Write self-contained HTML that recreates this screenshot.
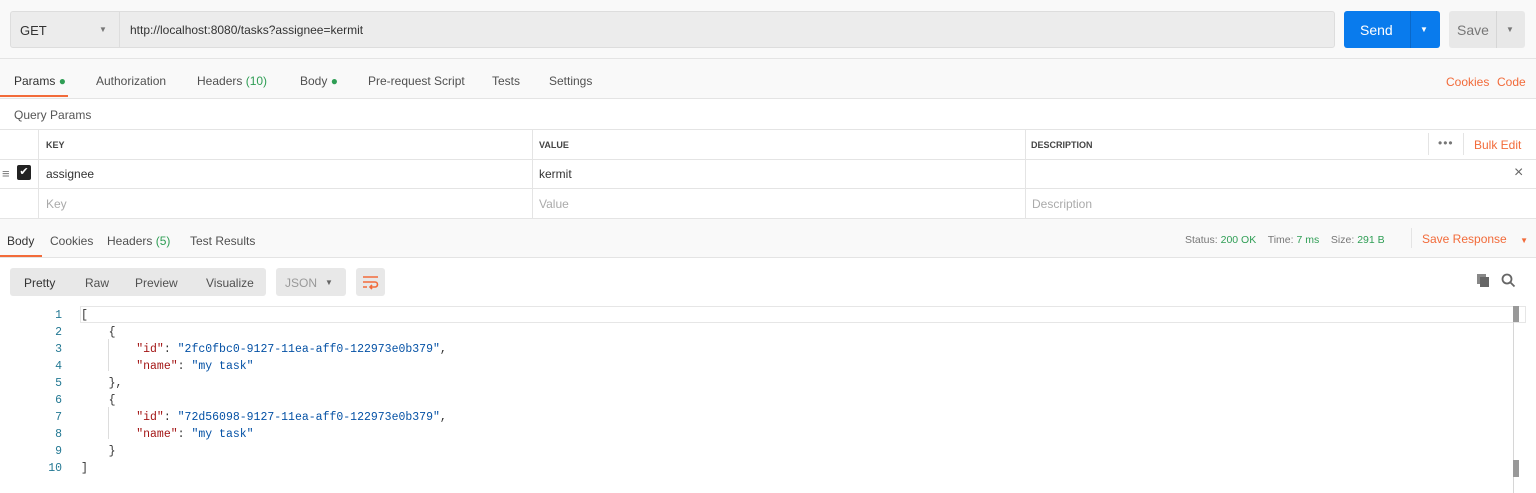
<!DOCTYPE html>
<html><head><meta charset="utf-8"><style>
*{box-sizing:border-box;margin:0;padding:0}
body{width:1536px;height:493px;overflow:hidden;background:#fff;font-family:"Liberation Sans",sans-serif;font-size:12px;color:#505050;position:relative}
.a{position:absolute;white-space:nowrap}
.hl{position:absolute;left:0;width:1536px;height:1px;background:#e4e4e4}
.vl{position:absolute;width:1px;background:#e4e4e4}
.or{color:#f26b3a}
.gr{color:#2f9e55}
.mono{font-family:"Liberation Mono",monospace;font-size:11.5px}
.k{color:#a31515}.s{color:#0451a5}.n{color:#237893}
</style></head><body>
<div class="a" style="left:0;top:0;width:1536px;height:98px;background:#f9f9f9"></div>
<div class="a" style="left:10px;top:11px;width:1325px;height:37px;background:#ececec;border:1px solid #ddd;border-radius:3px"></div>
<div class="vl" style="left:119px;top:12px;height:35px;background:#ddd"></div>
<div class="a" style="left:20px;top:23px;font-size:13px;color:#333">GET</div>
<div class="a" style="left:99px;top:25px;font-size:8px;color:#777">▼</div>
<div class="a" style="left:130px;top:23px;font-size:12px;color:#333">http://localhost:8080/tasks?assignee=kermit</div>
<div class="a" style="left:1344px;top:11px;width:96px;height:37px;background:#097bed;border-radius:3px"></div>
<div class="vl" style="left:1410px;top:11px;height:37px;background:#0a68c8"></div>
<div class="a" style="left:1360px;top:22px;font-size:14px;color:#fff">Send</div>
<div class="a" style="left:1420px;top:25px;font-size:8px;color:#fff">▼</div>
<div class="a" style="left:1449px;top:11px;width:76px;height:37px;background:#e8e8e8;border-radius:3px"></div>
<div class="vl" style="left:1496px;top:11px;height:37px;background:#d6d6d6"></div>
<div class="a" style="left:1457px;top:22px;font-size:14px;color:#777">Save</div>
<div class="a" style="left:1506px;top:25px;font-size:8px;color:#777">▼</div>
<div class="hl" style="top:58px"></div>
<div class="a" style="left:14px;top:74px;color:#333">Params <span class="gr">●</span></div>
<div class="a" style="left:96px;top:74px">Authorization</div>
<div class="a" style="left:197px;top:74px">Headers <span class="gr">(10)</span></div>
<div class="a" style="left:300px;top:74px">Body <span class="gr">●</span></div>
<div class="a" style="left:368px;top:74px">Pre-request Script</div>
<div class="a" style="left:492px;top:74px">Tests</div>
<div class="a" style="left:549px;top:74px">Settings</div>
<div class="a or" style="left:1446px;top:75px">Cookies</div>
<div class="a or" style="left:1497px;top:75px">Code</div>
<div class="a" style="left:0;top:95px;width:68px;height:2px;background:#f26b3a"></div>
<div class="hl" style="top:98px"></div>
<div class="a" style="left:14px;top:108px;color:#555">Query Params</div>
<div class="hl" style="top:129px"></div>
<div class="hl" style="top:159px"></div>
<div class="hl" style="top:188px"></div>
<div class="hl" style="top:218px"></div>
<div class="vl" style="left:38px;top:129px;height:89px"></div>
<div class="vl" style="left:532px;top:129px;height:89px"></div>
<div class="vl" style="left:1025px;top:129px;height:89px"></div>
<div class="vl" style="left:1428px;top:133px;height:22px"></div>
<div class="vl" style="left:1463px;top:133px;height:22px"></div>
<div class="a" style="left:46px;top:140px;font-size:9px;font-weight:bold;color:#444">KEY</div>
<div class="a" style="left:539px;top:140px;font-size:9px;font-weight:bold;color:#444">VALUE</div>
<div class="a" style="left:1031px;top:140px;font-size:9px;font-weight:bold;color:#444">DESCRIPTION</div>
<div class="a" style="left:1438px;top:136px;font-size:12px;color:#777;letter-spacing:1px">•••</div>
<div class="a or" style="left:1474px;top:138px">Bulk Edit</div>
<div class="a" style="left:2px;top:166px;font-size:13px;color:#777">≡</div>
<div class="a" style="left:17px;top:165px;width:14px;height:15px;background:#222;border-radius:2px;color:#fff;font-size:11px;text-align:center;line-height:15px">✔</div>
<div class="a" style="left:46px;top:167px;color:#333">assignee</div>
<div class="a" style="left:539px;top:167px;color:#333">kermit</div>
<div class="a" style="left:1514px;top:164px;font-size:16px;color:#666">×</div>
<div class="a" style="left:46px;top:197px;color:#aaa">Key</div>
<div class="a" style="left:539px;top:197px;color:#aaa">Value</div>
<div class="a" style="left:1032px;top:197px;color:#aaa">Description</div>
<div class="a" style="left:0;top:219px;width:1536px;height:38px;background:#f9f9f9"></div>
<div class="a" style="left:7px;top:234px;color:#333">Body</div>
<div class="a" style="left:50px;top:234px">Cookies</div>
<div class="a" style="left:107px;top:234px">Headers <span class="gr">(5)</span></div>
<div class="a" style="left:190px;top:234px">Test Results</div>
<div class="a" style="left:0;top:255px;width:42px;height:2px;background:#f26b3a"></div>
<div class="a" style="left:1185px;top:234px;font-size:10.5px;color:#777">Status: <span class="gr">200 OK</span>&nbsp;&nbsp;&nbsp; Time: <span class="gr">7 ms</span>&nbsp;&nbsp;&nbsp; Size: <span class="gr">291 B</span></div>
<div class="vl" style="left:1411px;top:228px;height:20px"></div>
<div class="a or" style="left:1422px;top:232px">Save Response&nbsp;&nbsp;&nbsp; <span style="font-size:8px">▼</span></div>
<div class="hl" style="top:257px"></div>
<div class="a" style="left:10px;top:268px;width:256px;height:28px;background:#e8e8e8;border-radius:3px"></div>
<div class="a" style="left:24px;top:276px;color:#333">Pretty</div>
<div class="a" style="left:85px;top:276px">Raw</div>
<div class="a" style="left:135px;top:276px">Preview</div>
<div class="a" style="left:206px;top:276px">Visualize</div>
<div class="a" style="left:276px;top:268px;width:70px;height:28px;background:#e8e8e8;border-radius:3px"></div>
<div class="a" style="left:285px;top:276px;color:#999">JSON</div>
<div class="a" style="left:325px;top:278px;font-size:8px;color:#666">▼</div>
<div class="a" style="left:356px;top:268px;width:29px;height:28px;background:#e8e8e8;border-radius:3px"></div>
<svg class="a" style="left:362px;top:274px" width="17" height="16" viewBox="0 0 17 16" fill="none" stroke="#f26b3a" stroke-width="1.6"><path d="M1 3h15M1 8h12a2.5 2.5 0 0 1 0 5H8M10 11l-2 2 2 2M1 13h4"/></svg>
<svg class="a" style="left:1476px;top:273px" width="14" height="15"><rect x="1" y="1" width="9" height="10" fill="#888"/><rect x="4" y="4" width="9" height="10" fill="#666"/></svg>
<svg class="a" style="left:1501px;top:273px" width="15" height="15" fill="none" stroke="#666" stroke-width="1.8"><circle cx="6" cy="6" r="4.5"/><path d="M9.5 9.5l4 4"/></svg>
<div class="a" style="left:80px;top:306px;width:1446px;height:17px;border:1px solid #e6e6e6"></div>
<div class="vl" style="left:1513px;top:306px;height:187px;background:#d6d6d6"></div>
<div class="a" style="left:1513px;top:306px;width:6px;height:16px;background:#999"></div>
<div class="a" style="left:1513px;top:460px;width:6px;height:17px;background:#999"></div>
<div class="vl" style="left:108px;top:339px;height:32px;background:#ddd"></div>
<div class="vl" style="left:108px;top:407px;height:32px;background:#ddd"></div>
<div class="a mono n" style="left:20px;top:307px;width:42px;text-align:right;line-height:17px">1<br>2<br>3<br>4<br>5<br>6<br>7<br>8<br>9<br>10</div>
<div class="a mono" style="left:81px;top:307px;line-height:17px;color:#333;white-space:pre">[
    {
        <span class="k">"id"</span>: <span class="s">"2fc0fbc0-9127-11ea-aff0-122973e0b379"</span>,
        <span class="k">"name"</span>: <span class="s">"my task"</span>
    },
    {
        <span class="k">"id"</span>: <span class="s">"72d56098-9127-11ea-aff0-122973e0b379"</span>,
        <span class="k">"name"</span>: <span class="s">"my task"</span>
    }
]</div>
</body></html>
